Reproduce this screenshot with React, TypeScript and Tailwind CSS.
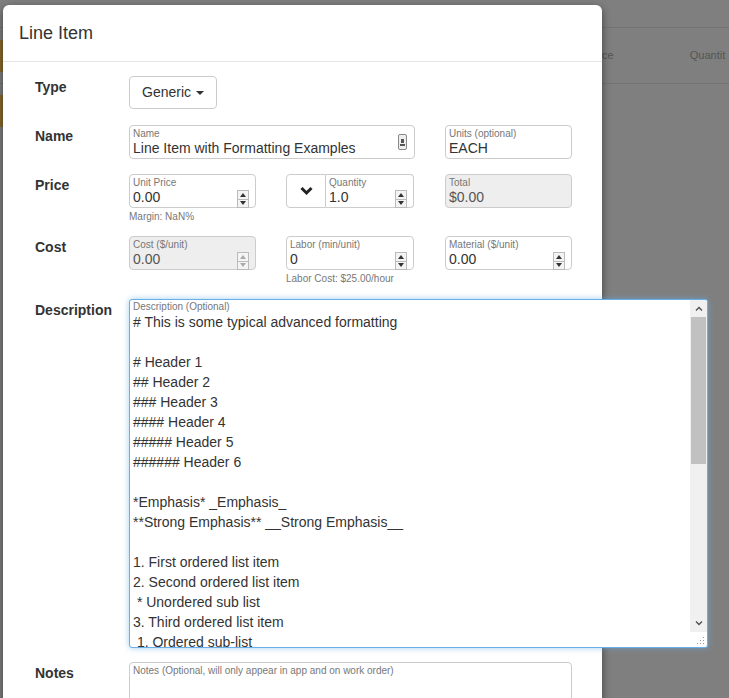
import React from "react";

const F = { fontFamily: '"Liberation Sans", Arial, sans-serif' };

function Spin({ disabled }: { disabled?: boolean }) {
  const c = disabled ? "#aaa" : "#333";
  return (
    <div className="absolute right-[6px] top-[15px] w-[12px] h-[18px] border border-[#bbb] bg-[#f4f4f4] flex flex-col">
      <div className="flex-1 flex items-center justify-center border-b border-[#bbb]">
        <svg width="6" height="4"><polygon points="3,0 6,4 0,4" fill={c} /></svg>
      </div>
      <div className="flex-1 flex items-center justify-center">
        <svg width="6" height="4"><polygon points="0,0 6,0 3,4" fill={c} /></svg>
      </div>
    </div>
  );
}

function Field({ label, value, w, disabled, spin, icon }: { label: string; value: string; w: string; disabled?: boolean; spin?: boolean; icon?: boolean }) {
  return (
    <div className={`relative shrink-0 ${w} h-[34px] border border-[#ccc] rounded-[4px] ${disabled ? "bg-[#eee]" : "bg-white"} px-[3px]`}>
      <div className="text-[10px] leading-[11px] text-[#777] pt-[2px]">{label}</div>
      <div className={`text-[14px] leading-[18px] ${disabled ? "text-[#555]" : "text-[#333]"}`}>{value}</div>
      {spin && <Spin disabled={disabled} />}
      {icon && (
        <div className="absolute right-[7px] top-[8px] w-[9px] h-[16px] border border-[#888] rounded-[2px] bg-[#eee] flex flex-col items-center justify-center gap-[1px]">
          <div className="w-[3px] h-[4px] bg-[#555]" />
          <div className="w-[5px] h-[2px] bg-[#555]" />
        </div>
      )}
    </div>
  );
}

const desc = [
  "# This is some typical advanced formatting",
  "",
  "# Header 1",
  "## Header 2",
  "### Header 3",
  "#### Header 4",
  "##### Header 5",
  "###### Header 6",
  "",
  "*Emphasis* _Emphasis_",
  "**Strong Emphasis** __Strong Emphasis__",
  "",
  "1. First ordered list item",
  "2. Second ordered list item",
  " * Unordered sub list",
  "3. Third ordered list item",
  " 1. Ordered sub-list",
];

function Label({ children }: { children: React.ReactNode }) {
  return <div className="w-[94px] shrink-0 text-[14px] font-bold text-[#333] pt-[1px]">{children}</div>;
}

export default function App() {
  return (
    <div style={F} className="relative w-[729px] h-[698px] overflow-hidden bg-[#7f7f7f]">
      <div className="h-[28px] border-b border-[#737373]" />
      <div className="h-[56px] border-b border-[#737373] flex items-center text-[11px] text-[#555]">
        <span className="ml-[596px]">rice</span>
        <span className="ml-[76px]">Quantit</span>
      </div>
      <div className="absolute left-0 top-[40px] w-[3px] h-[32px] bg-[#8a6a2a]" />
      <div className="absolute left-0 top-[95px] w-[3px] h-[32px] bg-[#8a6a2a]" />

      <div className="absolute left-[3px] top-[5px] w-[599px] h-[720px] bg-white rounded-[6px] shadow-[0_3px_9px_rgba(0,0,0,0.5)]">
        <div className="h-[57px] border-b border-[#e5e5e5] flex items-center px-[16px] text-[18px] text-[#333]">Line Item</div>
        <div className="pl-[32px] pt-[14px] flex flex-col">
          <div className="flex">
            <Label>Type</Label>
            <div className="h-[33px] px-[12px] border border-[#ccc] rounded-[4px] flex items-center gap-[5px] text-[14px] text-[#333]">
              Generic
              <svg width="8" height="4"><polygon points="0,0 8,0 4,4" fill="#333" /></svg>
            </div>
          </div>
          <div className="flex mt-[16px]">
            <Label>Name</Label>
            <Field label="Name" value="Line Item with Formatting Examples" w="w-[286px]" icon />
            <div className="w-[30px] shrink-0" />
            <Field label="Units (optional)" value="EACH" w="w-[127px]" />
          </div>
          <div className="flex mt-[15px]">
            <Label>Price</Label>
            <div className="shrink-0">
              <Field label="Unit Price" value="0.00" w="w-[127px]" spin />
              <div className="text-[10px] text-[#777] mt-[1px]">Margin: NaN%</div>
            </div>
            <div className="w-[30px] shrink-0" />
            <div className="flex h-[34px] shrink-0">
              <div className="w-[40px] border border-[#ccc] rounded-l-[4px] flex items-center justify-center">
                <svg width="13" height="10" viewBox="0 0 13 10"><path d="M1.5 2 L6.5 7 L11.5 2" stroke="#222" strokeWidth="3" fill="none" /></svg>
              </div>
              <div className="relative w-[88px] border border-l-0 border-[#ccc] rounded-r-[4px] px-[3px]">
                <div className="text-[10px] leading-[11px] text-[#777] pt-[2px]">Quantity</div>
                <div className="text-[14px] leading-[18px] text-[#333]">1.0</div>
                <Spin />
              </div>
            </div>
            <div className="w-[31px] shrink-0" />
            <Field label="Total" value="$0.00" w="w-[127px]" disabled />
          </div>
          <div className="flex mt-[12px]">
            <Label>Cost</Label>
            <Field label="Cost ($/unit)" value="0.00" w="w-[127px]" disabled spin />
            <div className="w-[30px] shrink-0" />
            <div className="shrink-0">
              <Field label="Labor (min/unit)" value="0" w="w-[128px]" spin />
              <div className="text-[10px] text-[#777] mt-[1px]">Labor Cost: $25.00/hour</div>
            </div>
            <div className="w-[31px] shrink-0" />
            <Field label="Material ($/unit)" value="0.00" w="w-[127px]" spin />
          </div>
          <div className="flex mt-[13px]">
            <Label>Description</Label>
            <div className="relative shrink-0 w-[579px] h-[349px] border border-[#66afe9] rounded-[3px] bg-white shadow-[0_0_6px_rgba(102,175,233,0.6)] overflow-hidden">
              <div className="pl-[3px] pr-[20px]">
                <div className="text-[10px] leading-[11px] text-[#777] pt-[1px]">Description (Optional)</div>
                {desc.map((l, i) => (
                  <div key={i} className="text-[14px] leading-[20px] text-[#333] whitespace-pre h-[20px]">{l}</div>
                ))}
              </div>
              <div className="absolute right-0 top-0 w-[17px] h-[332px] bg-[#f0f0f0] flex flex-col">
                <div className="h-[17px] flex items-center justify-center">
                  <svg width="8" height="5"><path d="M1 4.5 L4 1.5 L7 4.5" stroke="#505050" strokeWidth="1.4" fill="none" /></svg>
                </div>
                <div className="mx-[1px] h-[147px] bg-[#c1c1c1]" />
                <div className="flex-1" />
                <div className="h-[17px] flex items-center justify-center">
                  <svg width="8" height="5"><path d="M1 0.5 L4 3.5 L7 0.5" stroke="#505050" strokeWidth="1.4" fill="none" /></svg>
                </div>
              </div>
              <svg className="absolute right-[2px] bottom-[2px]" width="8" height="8">
                <g fill="#999"><rect x="6" y="0" width="1" height="1" /><rect x="3" y="3" width="1" height="1" /><rect x="6" y="3" width="1" height="1" /><rect x="0" y="6" width="1" height="1" /><rect x="3" y="6" width="1" height="1" /><rect x="6" y="6" width="1" height="1" /></g>
              </svg>
            </div>
          </div>
          <div className="flex mt-[14px]">
            <Label>Notes</Label>
            <div className="shrink-0 w-[443px] h-[60px] border border-[#ccc] rounded-[4px] px-[3px]">
              <div className="text-[10px] leading-[11px] text-[#777] pt-[2px]">Notes (Optional, will only appear in app and on work order)</div>
            </div>
          </div>
        </div>
      </div>
    </div>
  );
}
